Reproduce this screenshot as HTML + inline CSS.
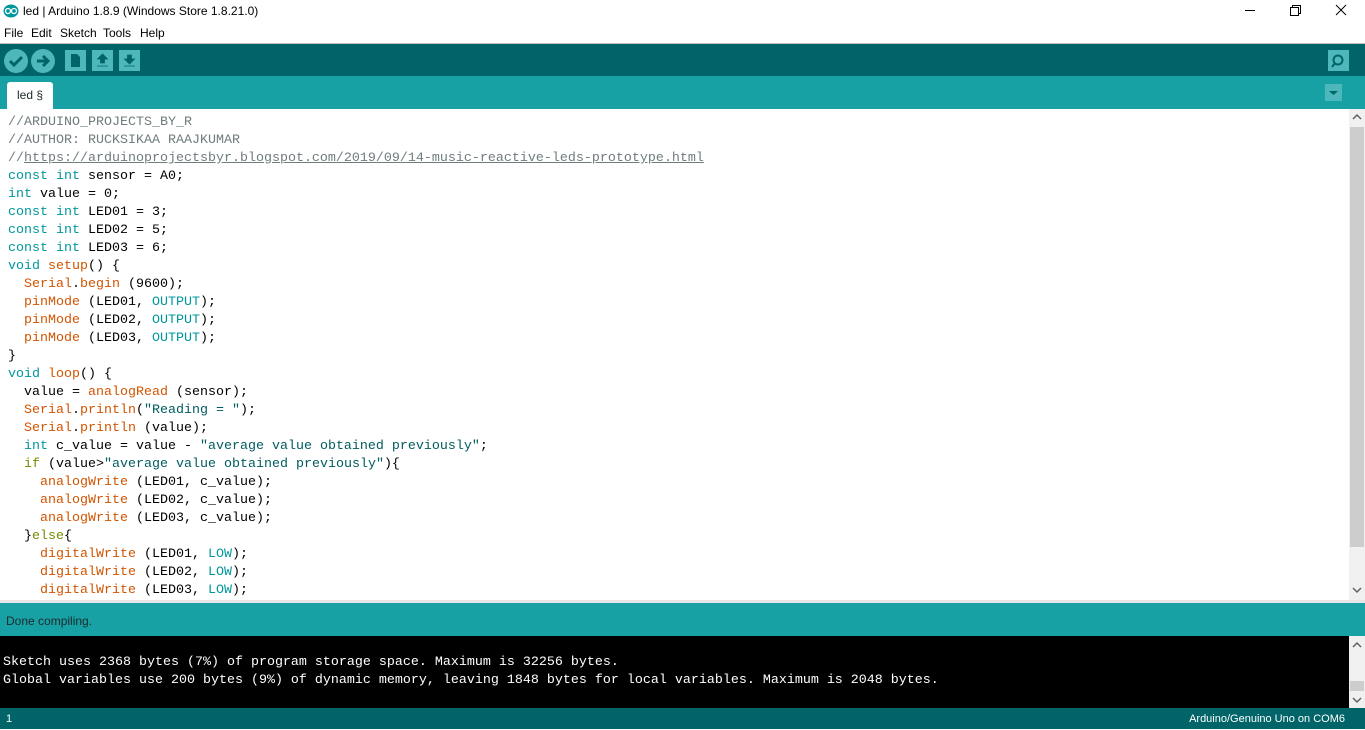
<!DOCTYPE html><html><head><meta charset="utf-8"><style>
*{margin:0;padding:0;box-sizing:border-box}
body{width:1365px;height:729px;overflow:hidden;background:#fff;font-family:"Liberation Sans",sans-serif;position:relative}
.abs{position:absolute}
#title{top:0;left:0;width:1365px;height:22px;font-size:12px;line-height:22px}
#menu{top:22px;left:0;width:1365px;height:20px;font-size:12px;line-height:22px}
#code{top:114px;left:8px;font-family:"Liberation Mono",monospace;font-size:13.33px;line-height:18px;white-space:pre;color:#000}
.c{color:#6f7c7e}.k{color:#00979c}.f{color:#d35400}.s{color:#005c5f}.i{color:#728e00}
#tb{top:43px;left:0;width:1365px;height:33px;background:#006468;border-top:1px solid #c0c0c0}
#tabs{top:76px;left:0;width:1365px;height:33px;background:#17a1a5}
#sb{top:109px;left:1349px;width:16px;height:491px;background:#f0f0f0}
#status{top:603px;left:0;width:1365px;height:33px;background:#17a1a5;font-size:12px;color:#1b2a2b;line-height:37px;padding-left:6px}
#con{top:636px;left:0;width:1349px;height:72px;background:#000;font-family:"Liberation Mono",monospace;font-size:13.33px;line-height:18px;color:#fff;white-space:pre;padding:18px 0 0 3px}
#bot{top:708px;left:0;width:1365px;height:21px;background:#006468;color:#fff;font-size:11px;line-height:22px}
</style></head><body>
<div id="title" class="abs"><svg class="abs" style="left:3px;top:4px" width="16" height="14"><ellipse cx="8" cy="7" rx="7.5" ry="6.5" fill="#00979c"/><circle cx="5" cy="7" r="2.5" fill="none" stroke="#fff" stroke-width="1.3"/><circle cx="11" cy="7" r="2.5" fill="none" stroke="#fff" stroke-width="1.3"/></svg><span class="abs" style="left:23px">led | Arduino 1.8.9 (Windows Store 1.8.21.0)</span>
<svg class="abs" style="left:1240px;top:0" width="125" height="22"><line x1="5" y1="10.5" x2="15" y2="10.5" stroke="#000"/><rect x="50.5" y="7.5" width="8" height="8" fill="#fff" stroke="#000"/><path d="M52.5 7.5V5.5H60.5V13.5H58.5" fill="none" stroke="#000"/><path d="M96 5L106 15M106 5L96 15" stroke="#000"/></svg></div>
<div id="menu" class="abs"><span class="abs" style="left:4px">File</span><span class="abs" style="left:31px">Edit</span><span class="abs" style="left:60px">Sketch</span><span class="abs" style="left:103px">Tools</span><span class="abs" style="left:140px">Help</span></div>
<div id="tb" class="abs">
<svg class="abs" style="left:0;top:0" width="150" height="33"><circle cx="16" cy="17" r="12" fill="#4db7bb"/><path d="M10 17l4 4 8-8" stroke="#006468" stroke-width="3" fill="none"/><circle cx="43" cy="17" r="12" fill="#4db7bb"/><path d="M37 17h10M43 12l5 5-5 5" stroke="#006468" stroke-width="3" fill="none"/>
<rect x="65" y="6" width="21" height="21" fill="#4db7bb"/><path d="M71 10h6l3 3v10h-9z" fill="#006468"/>
<rect x="92" y="6" width="21" height="21" fill="#4db7bb"/><path d="M102.5 10l-5 5h3v4h4v-4h3z M97 22h11" fill="#006468" stroke="#006468" stroke-width=".8"/>
<rect x="119" y="6" width="21" height="21" fill="#4db7bb"/><path d="M129.5 20l-5-5h3v-4h4v4h3z M124 22h11" fill="#006468" stroke="#006468" stroke-width=".8"/></svg>
<svg class="abs" style="left:1328px;top:6px" width="21" height="21"><rect width="21" height="21" fill="#4db7bb"/><circle cx="10" cy="10" r="4.5" fill="none" stroke="#006468" stroke-width="2"/><path d="M7 13l-3 4" stroke="#006468" stroke-width="2"/></svg></div>
<div id="tabs" class="abs"><div class="abs" style="left:7px;top:6px;width:46px;height:27px;background:#fff;border-radius:3px 3px 0 0;font-size:12px;line-height:26px;text-align:center;color:#1b2a2b">led §</div>
<svg class="abs" style="left:1325px;top:8px" width="17" height="17"><rect width="17" height="17" fill="#4db7bb"/><path d="M4 7h9l-4.5 4z" fill="#006468"/></svg></div>
<div id="code" class="abs"><span class="c">//ARDUINO_PROJECTS_BY_R</span>
<span class="c">//AUTHOR: RUCKSIKAA RAAJKUMAR</span>
<span class="c">//<u>https://arduinoprojectsbyr.blogspot.com/2019/09/14-music-reactive-leds-prototype.html</u></span>
<span class="k">const</span> <span class="k">int</span> sensor = A0;
<span class="k">int</span> value = 0;
<span class="k">const</span> <span class="k">int</span> LED01 = 3;
<span class="k">const</span> <span class="k">int</span> LED02 = 5;
<span class="k">const</span> <span class="k">int</span> LED03 = 6;
<span class="k">void</span> <span class="f">setup</span>() {
  <span class="f">Serial</span>.<span class="f">begin</span> (9600);
  <span class="f">pinMode</span> (LED01, <span class="k">OUTPUT</span>);
  <span class="f">pinMode</span> (LED02, <span class="k">OUTPUT</span>);
  <span class="f">pinMode</span> (LED03, <span class="k">OUTPUT</span>);
}
<span class="k">void</span> <span class="f">loop</span>() {
  value = <span class="f">analogRead</span> (sensor);
  <span class="f">Serial</span>.<span class="f">println</span>(<span class="s">"Reading = "</span>);
  <span class="f">Serial</span>.<span class="f">println</span> (value);
  <span class="k">int</span> c_value = value - <span class="s">"average value obtained previously"</span>;
  <span class="i">if</span> (value&gt;<span class="s">"average value obtained previously"</span>){
    <span class="f">analogWrite</span> (LED01, c_value);
    <span class="f">analogWrite</span> (LED02, c_value);
    <span class="f">analogWrite</span> (LED03, c_value);
  }<span class="i">else</span>{
    <span class="f">digitalWrite</span> (LED01, <span class="k">LOW</span>);
    <span class="f">digitalWrite</span> (LED02, <span class="k">LOW</span>);
    <span class="f">digitalWrite</span> (LED03, <span class="k">LOW</span>);</div>
<div class="abs" style="top:600px;left:0;width:1365px;height:3px;background:#e6e6e6"></div>
<div id="sb" class="abs"><div class="abs" style="top:18px;left:1px;width:14px;height:420px;background:#cdcdcd"></div><svg class="abs" style="top:3px;left:3px" width="10" height="10"><path d="M1 7l4-4 4 4" stroke="#606060" stroke-width="1.5" fill="none"/></svg><svg class="abs" style="top:476px;left:3px" width="10" height="10"><path d="M1 3l4 4 4-4" stroke="#606060" stroke-width="1.5" fill="none"/></svg></div>
<div id="status" class="abs">Done compiling.</div>
<div id="con" class="abs">Sketch uses 2368 bytes (7%) of program storage space. Maximum is 32256 bytes.
Global variables use 200 bytes (9%) of dynamic memory, leaving 1848 bytes for local variables. Maximum is 2048 bytes.</div>
<div class="abs" style="top:636px;left:1349px;width:16px;height:72px;background:#f0f0f0"><svg class="abs" style="top:4px;left:3px" width="10" height="10"><path d="M1 7l4-4 4 4" stroke="#606060" stroke-width="1.5" fill="none"/></svg><div class="abs" style="top:45px;left:1px;width:14px;height:10px;background:#cdcdcd"></div><svg class="abs" style="top:59px;left:3px" width="10" height="10"><path d="M1 3l4 4 4-4" stroke="#606060" stroke-width="1.5" fill="none"/></svg></div>
<div id="bot" class="abs"><span class="abs" style="left:6px">1</span><span class="abs" style="right:20px">Arduino/Genuino Uno on COM6</span></div>
</body></html>
